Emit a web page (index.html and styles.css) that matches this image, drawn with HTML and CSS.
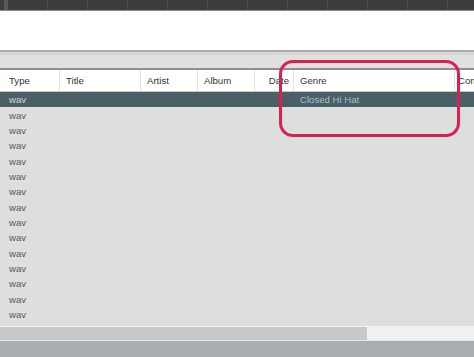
FILE: index.html
```html
<!DOCTYPE html>
<html lang="en">
<head>
  <meta charset="UTF-8" />
  <title>Samples</title>
  <link rel="stylesheet" href="styles.css">
</head>
<body>

<div class="barra-superior"></div>
<div class="zona-blanca"></div>
<div class="divisor"></div>
<div class="barra-herramientas"></div>

<main class="lista">
  <div class="fila cabecera">
    <div class="celda c-type">Type</div>
    <div class="celda">Title</div>
    <div class="celda">Artist</div>
    <div class="celda">Album</div>
    <div class="celda c-date">Date</div>
    <div class="celda">Genre</div>
    <div class="celda c-com">Com</div>
  </div>

  <div id="filas"></div>

  <div class="marca"></div>
</main>

<div class="scroll">
  <div class="scroll-pulgar"></div>
</div>
<div class="pie"></div>

<script>
  const filas = document.getElementById("filas");
  for (let i = 0; i < 15; i++) {
    const div = document.createElement("div");
    div.classList.add("fila");
    if (i === 0) div.classList.add("seleccionada");
    div.innerHTML = `
      <div class="celda c-type">wav</div>
      <div class="celda"></div>
      <div class="celda"></div>
      <div class="celda"></div>
      <div class="celda"></div>
      <div class="celda c-genre">${i === 0 ? "Closed Hi Hat" : ""}</div>
      <div class="celda"></div>
    `;
    filas.appendChild(div);
  }
</script>

</body>
</html>
```

FILE: styles.css
```css
body {
  margin: 0;
  width: 474px;
  height: 357px;
  overflow: hidden;
  font-family: "Liberation Sans", Arial, sans-serif;
  font-size: 9.6px;
  background: #a9aeb0;
}

.barra-superior {
  height: 10px;
  background-color: #3d3d3d;
  background-image:
    linear-gradient(90deg, transparent 4px, #4f5f58 4px, #4f5f58 8px, transparent 8px),
    repeating-linear-gradient(90deg, transparent 0, transparent 7px, #4b4b4b 7px, #4b4b4b 8px, transparent 8px, transparent 40px);
  border-bottom: 1px solid #8c8c8c;
}

.zona-blanca {
  height: 39px;
  background: white;
}

.divisor {
  height: 2px;
  background: #adadad;
  border-bottom: 3px solid #d6d6d6;
}

.barra-herramientas {
  height: 13px;
  background: #dfe0df;
  border-bottom: 2px solid #8e8e8e;
}

.lista {
  position: relative;
  height: 256px;
  background: #dcdfde;
}

.fila {
  display: grid;
  grid-template-columns: 60px 81px 57px 57px 39px 161px 1fr;
  height: 15.36px;
  align-items: center;
  color: #585858;
}

.cabecera {
  height: 22px;
  background: white;
  color: #333;
  box-sizing: border-box;
  border-bottom: 1px solid #c9c9c9;
}

.cabecera .celda {
  height: 100%;
  display: flex;
  align-items: center;
  border-right: 1px solid #e2e2e2;
}

.celda {
  padding-left: 6px;
  white-space: nowrap;
  overflow: hidden;
}

.c-type {
  padding-left: 9px;
}

.cabecera .c-date {
  justify-content: flex-end;
  padding: 0 4px 0 0;
}

.cabecera .c-com {
  padding-left: 3px;
  border-right: none;
}

.seleccionada {
  background: #4a5f66;
  color: #d2dadc;
}

.seleccionada .c-genre {
  color: #a7bfce;
}

.marca {
  position: absolute;
  left: 279px;
  top: -10px;
  width: 181px;
  height: 77px;
  box-sizing: border-box;
  border: 3.5px solid #dc1f52;
  border-radius: 14px;
}

.scroll {
  height: 13px;
  background: #f0f0f0;
  border-top: 1px solid #f4f4f4;
}

.scroll-pulgar {
  width: 367px;
  height: 100%;
  background: #c9c9c9;
}

.pie {
  height: 17px;
  border-top: 1px solid #e8e8e8;
  background: #a9aeb0;
}
```
